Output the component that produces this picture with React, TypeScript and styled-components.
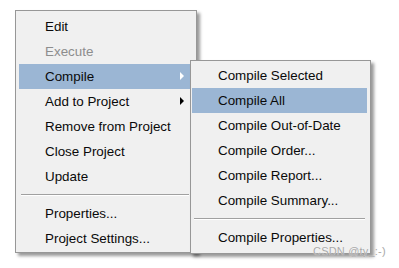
import React from "react";
import styled, { createGlobalStyle } from "styled-components";

const GlobalStyle = createGlobalStyle`
  html, body {
    margin: 0;
    padding: 0;
    background: #ffffff;
  }
`;

const Stage = styled.div`
  position: relative;
  width: 399px;
  height: 268px;
  padding: 10px 0 0 15px;
  box-sizing: border-box;
  font-family: "Liberation Sans", Arial, sans-serif;
  font-size: 13.4px;
`;

const Menu = styled.ul<{ $pad: string }>`
  list-style: none;
  margin: 0;
  width: 182px;
  box-sizing: border-box;
  padding: ${(p) => p.$pad};
  background: #f0f0f0;
  border: 1px solid #979797;
  box-shadow: 3px 3px 3px rgba(0, 0, 0, 0.4);
`;

const Flyout = styled(Menu)`
  position: absolute;
  left: 190px;
  top: 60px;
  width: 181px;
`;

const Item = styled.li<{ $active?: boolean; $disabled?: boolean }>`
  position: relative;
  display: flex;
  align-items: center;
  height: 25px;
  padding-left: 26px;
  color: ${(p) => (p.$disabled ? "#8d8d8d" : "#0a0a0a")};
  background: ${(p) => (p.$active ? "#9bb6d4" : "transparent")};
  white-space: nowrap;
  cursor: default;
`;

const Arrow = styled.span<{ $light?: boolean }>`
  position: absolute;
  right: 7px;
  top: 8px;
  width: 0;
  height: 0;
  border-top: 4px solid transparent;
  border-bottom: 4px solid transparent;
  border-left: 4px solid ${(p) => (p.$light ? "#ffffff" : "#000000")};
`;

const Separator = styled.li`
  height: 12px;
  display: flex;
  align-items: center;
  padding: 0 2px;

  &::before {
    content: "";
    flex: 1;
    border-top: 1px solid #a0a0a0;
    border-bottom: 1px solid #ffffff;
  }
`;

const Watermark = styled.div`
  position: absolute;
  left: 313px;
  top: 245px;
  font-family: "Liberation Sans", Arial, sans-serif;
  font-size: 11px;
  color: #a8a8a8;
  text-shadow: 0 0 1px #ffffff;
  letter-spacing: 0.2px;
`;

const App = (): JSX.Element => {
  return (
    <>
      <GlobalStyle />
      <Stage>
        <Menu $pad="3px 5px 1px 3px">
          <Item>Edit</Item>
          <Item $disabled>Execute</Item>
          <Item $active>
            Compile
            <Arrow $light />
          </Item>
          <Item>
            Add to Project
            <Arrow />
          </Item>
          <Item>Remove from Project</Item>
          <Item>Close Project</Item>
          <Item>Update</Item>
          <Separator />
          <Item>Properties...</Item>
          <Item>Project Settings...</Item>
        </Menu>

        <Flyout $pad="2px 3px 3px 1px">
          <Item>Compile Selected</Item>
          <Item $active>Compile All</Item>
          <Item>Compile Out-of-Date</Item>
          <Item>Compile Order...</Item>
          <Item>Compile Report...</Item>
          <Item>Compile Summary...</Item>
          <Separator />
          <Item>Compile Properties...</Item>
        </Flyout>

        <Watermark>CSDN @ty_:-)</Watermark>
      </Stage>
    </>
  );
};

export default App;
